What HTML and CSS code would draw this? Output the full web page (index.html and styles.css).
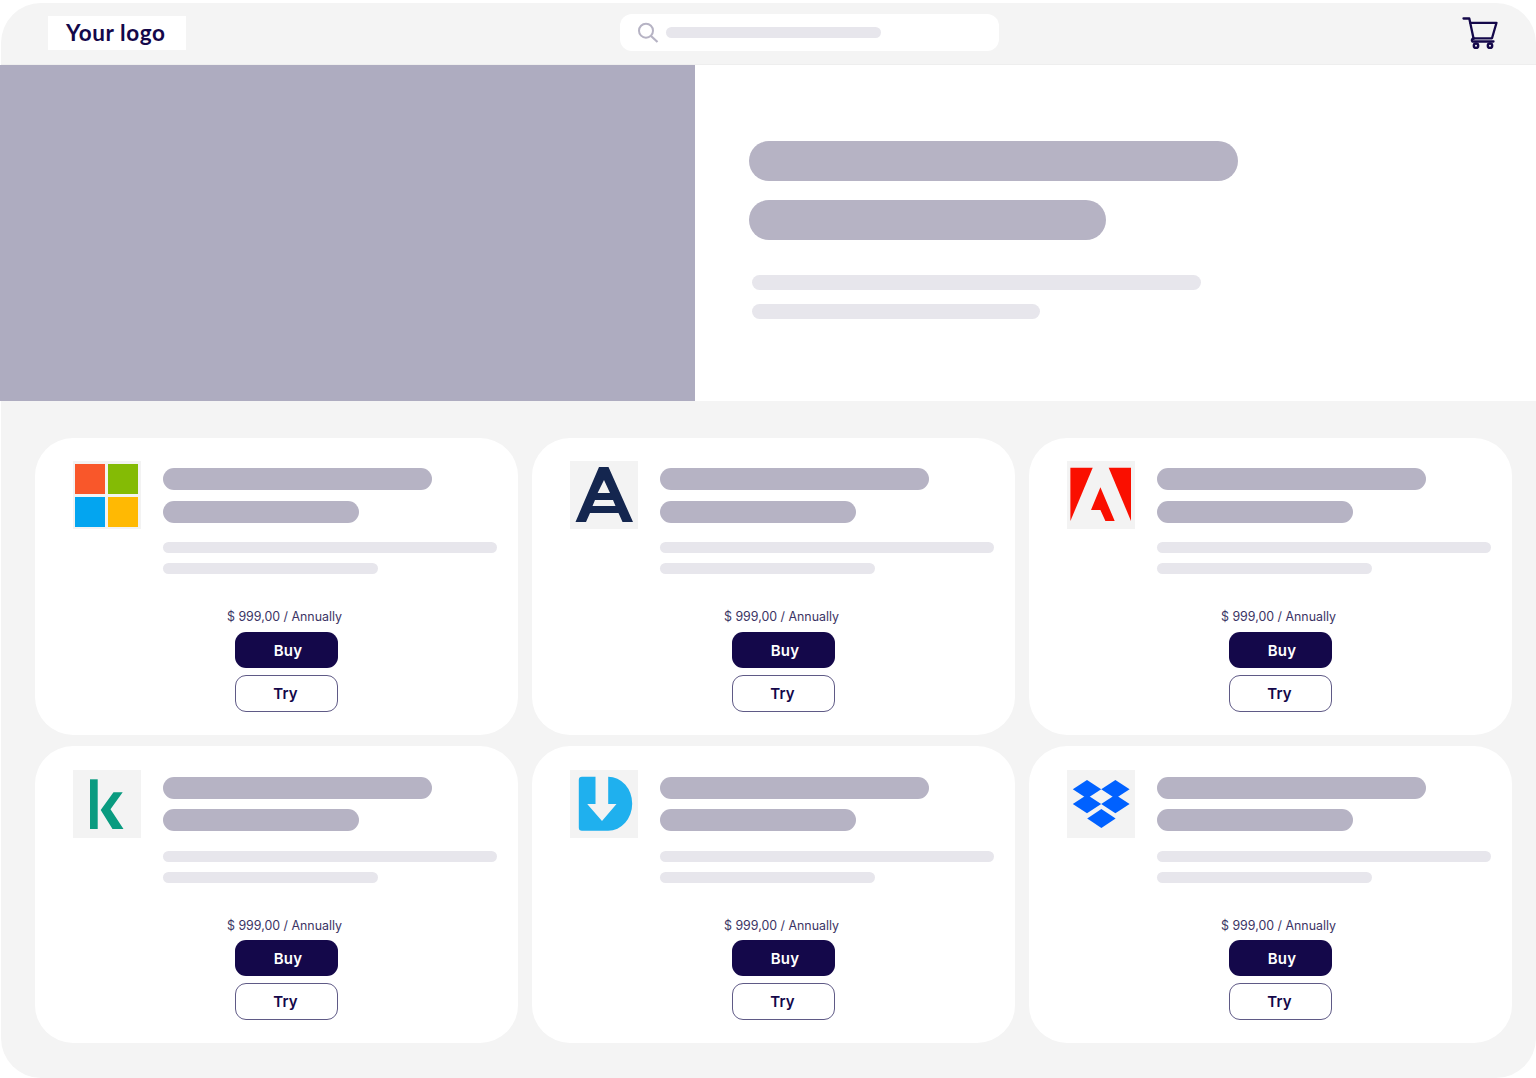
FILE: index.html
```html
<!DOCTYPE html>
<html lang="en">
<head>
<meta charset="utf-8">
<title>Marketplace</title>
<link rel="stylesheet" href="styles.css">
</head>
<body>
<div class="frame">
  <header class="topbar">
    <div class="logo"><span>Your logo</span></div>
    <div class="search">
      <svg class="search-icon" width="24" height="24" viewBox="0 0 24 24" fill="none"><circle cx="10" cy="9.7" r="7" stroke="#b6b3c4" stroke-width="2"/><path d="M15 15l6.5 6" stroke="#b6b3c4" stroke-width="2.2"/></svg>
      <div class="search-bar"></div>
    </div>
    <svg class="cart" width="40" height="40" viewBox="0 0 40 40" fill="none" stroke="#14084a" stroke-width="2.3" stroke-linejoin="round" stroke-linecap="round"><path d="M3.5 4.5H9.3L13.6 24.8"/><path d="M10.2 8.8H36.5L32 24.3H13.5"/><path d="M13.5 24.3Q11 25.4 12.3 27.5H33.5"/><circle cx="16" cy="31.7" r="2.2" stroke-width="2.4"/><circle cx="30" cy="31.7" r="2.2" stroke-width="2.4"/></svg>
  </header>

  <section class="hero">
    <div class="hero-image"></div>
    <div class="hero-text">
      <div class="bar bar-hero bar-hero-a"></div>
      <div class="bar bar-hero bar-hero-b"></div>
      <div class="bar thin-hero thin-hero-a"></div>
      <div class="bar thin-hero thin-hero-b"></div>
    </div>
  </section>

  <main class="grid">
    <article class="card">
      <div class="card-top">
        <svg class="brand" viewBox="0 0 68 68"><rect x="2" y="3" width="30" height="30" fill="#f9572a"/><rect x="35" y="3" width="30" height="30" fill="#84bb05"/><rect x="2" y="36" width="30" height="30" fill="#03a5f0"/><rect x="35" y="36" width="30" height="30" fill="#ffb903"/></svg>
        <div class="lines"><div class="bar l1"></div><div class="bar l2"></div><div class="bar l3"></div><div class="bar l4"></div></div>
      </div>
      <div class="card-foot"><p class="price">$ 999,00 / Annually</p><button class="btn btn-buy">Buy</button><button class="btn btn-try">Try</button></div>
    </article>

    <article class="card">
      <div class="card-top">
        <svg class="brand" viewBox="0 0 68 68"><path fill="#14264f" fill-rule="evenodd" d="M29 6H38.5L63 61H52.5L48.5 52H20L16 61H5.5ZM34 19L27.6 32H40ZM25 39L22.5 45H45.5L43 39Z"/></svg>
        <div class="lines"><div class="bar l1"></div><div class="bar l2"></div><div class="bar l3"></div><div class="bar l4"></div></div>
      </div>
      <div class="card-foot"><p class="price">$ 999,00 / Annually</p><button class="btn btn-buy">Buy</button><button class="btn btn-try">Try</button></div>
    </article>

    <article class="card">
      <div class="card-top">
        <svg class="brand" viewBox="0 0 68 68"><g fill="#fa0f00"><path d="M3.4 6.7H25.7L3.4 60Z"/><path d="M41.7 6.7H64V60Z"/><path d="M33.4 26.3L47.7 60H38.4L33.4 49H24Z"/></g></svg>
        <div class="lines"><div class="bar l1"></div><div class="bar l2"></div><div class="bar l3"></div><div class="bar l4"></div></div>
      </div>
      <div class="card-foot"><p class="price">$ 999,00 / Annually</p><button class="btn btn-buy">Buy</button><button class="btn btn-try">Try</button></div>
    </article>

    <article class="card">
      <div class="card-top">
        <svg class="brand" viewBox="0 0 68 68"><g fill="#0a9b80"><rect x="17" y="9.3" width="7.7" height="49.7"/><path d="M40.5 22.3H49.7L37.5 39.3L50.5 59H39.5L27.7 40Z"/></g></svg>
        <div class="lines"><div class="bar l1"></div><div class="bar l2"></div><div class="bar l3"></div><div class="bar l4"></div></div>
      </div>
      <div class="card-foot"><p class="price">$ 999,00 / Annually</p><button class="btn btn-buy">Buy</button><button class="btn btn-try">Try</button></div>
    </article>

    <article class="card">
      <div class="card-top">
        <svg class="brand" viewBox="0 0 68 68"><path fill="#1fb0ee" d="M12 6.7H25.5V34H17.2L32 51L46.5 34H38.2V6.7A24 27 0 0 1 38.2 60.7H12Q8.8 60.7 8.8 57.5V10Q8.8 6.7 12 6.7Z"/></svg>
        <div class="lines"><div class="bar l1"></div><div class="bar l2"></div><div class="bar l3"></div><div class="bar l4"></div></div>
      </div>
      <div class="card-foot"><p class="price">$ 999,00 / Annually</p><button class="btn btn-buy">Buy</button><button class="btn btn-try">Try</button></div>
    </article>

    <article class="card">
      <div class="card-top">
        <svg class="brand" viewBox="0 0 68 68"><g fill="#0061ff"><path d="M20 10L34.2 19.3L20 28.6L5.8 19.3Z"/><path d="M48.4 10L62.6 19.3L48.4 28.6L34.2 19.3Z"/><path d="M20 24.7L34.2 34L20 43.3L5.8 34Z"/><path d="M48.4 24.7L62.6 34L48.4 43.3L34.2 34Z"/><path d="M34.4 39L48.6 48.5L34.4 58L20.2 48.5Z"/></g></svg>
        <div class="lines"><div class="bar l1"></div><div class="bar l2"></div><div class="bar l3"></div><div class="bar l4"></div></div>
      </div>
      <div class="card-foot"><p class="price">$ 999,00 / Annually</p><button class="btn btn-buy">Buy</button><button class="btn btn-try">Try</button></div>
    </article>
  </main>
</div>
</body>
</html>
```
FILE: styles.css
```css
* { box-sizing: border-box; }
html, body { margin: 0; padding: 0; background: #fff; }
body { padding: 3px 0 0 1px; font-family: Inter, "Liberation Sans", sans-serif; color: #14084a; }

.frame { height: 1075px; background: #f4f4f4; border-radius: 40px; }

.topbar { height: 62px; display: flex; align-items: flex-start; padding-left: 47px; padding-right: 36px; border-bottom: 1px solid #eeeeee; }
.logo { width: 138px; height: 34px; margin-top: 13px; background: #fff; padding: 0 0 2px 18px; display: flex; align-items: center; font-family: Lato, Inter, sans-serif; font-weight: 700; font-size: 22.5px; letter-spacing: 0.6px; color: #14084a; }
.search { width: 379px; height: 37px; margin: 11px 0 0 434px; background: #fff; border-radius: 12px; display: flex; align-items: center; padding-left: 16px; }
.search-icon { flex: none; }
.search-bar { width: 215px; height: 11px; margin-left: 6px; border-radius: 6px; background: #e7e6ec; }
.cart { margin: 11px 0 0 auto; }

.hero { height: 336px; margin-left: -1px; display: flex; background: #fff; }
.hero-image { width: 695px; background: #aeacc0; }
.hero-text { flex: 1; padding: 76px 0 0 54px; display: flex; flex-direction: column; align-items: flex-start; }
.bar { border-radius: 20px; }
.bar-hero { height: 40px; background: #b6b3c4; }
.bar-hero-a { width: 489px; margin-bottom: 19px; }
.bar-hero-b { width: 357px; margin-bottom: 35px; }
.thin-hero { height: 15px; margin-left: 3px; background: #e7e6ec; }
.thin-hero-a { width: 449px; margin-bottom: 14px; }
.thin-hero-b { width: 288px; }

.grid { display: grid; grid-template-columns: repeat(3, 483px); column-gap: 14px; row-gap: 11px; padding: 37px 0 0 34px; }
.card { height: 297px; background: #fff; border-radius: 38px; padding: 23px 21px 0 38px; }
.card-top { display: flex; gap: 22px; }
.brand { flex: none; width: 68px; height: 68px; background: #f3f3f3; }
.lines { flex: 1; padding-top: 7px; }
.l1 { width: 269px; height: 22px; background: #b6b3c4; margin-bottom: 11px; }
.l2 { width: 196px; height: 22px; background: #b6b3c4; margin-bottom: 19px; }
.l3 { width: 334px; height: 11px; background: #e7e6ec; margin-bottom: 10px; }
.l4 { width: 215px; height: 11px; background: #e7e6ec; }

.card-foot { display: flex; flex-direction: column; align-items: center; margin: 35px 0 0 3px; }
.price { margin: 0 4px 7px 0; font-size: 12.4px; line-height: 16px; color: #3b3464; }
.btn { width: 103px; font-family: Inter, sans-serif; font-weight: 600; font-size: 15px; letter-spacing: 0.2px; border-radius: 11px; padding: 0; }
.btn-buy { height: 36px; background: #14084a; color: #fff; border: 0; margin-bottom: 7px; padding-left: 3px; }
.btn-try { height: 37px; background: #fff; color: #14084a; border: 1px solid #5f5a86; padding-right: 2px; }

/* Second row sits a pixel lower inside its cards */
.card:nth-child(n+4) { padding-top: 24px; }
.card:nth-child(n+4) .l1 { margin-bottom: 10px; }
.card:nth-child(n+4) .l2 { margin-bottom: 20px; }
.card:nth-child(n+4) .price { margin-bottom: 6px; }
```
